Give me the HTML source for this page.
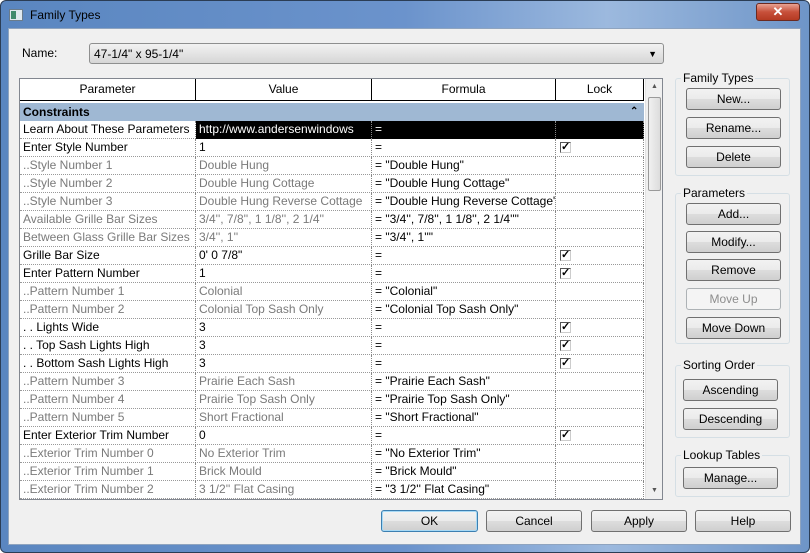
<!DOCTYPE html>
<html><head><style>
*{box-sizing:border-box;margin:0;padding:0}
body{width:810px;height:553px;overflow:hidden;font-family:"Liberation Sans",sans-serif;font-size:12px;color:#000;background:#fff}
.win{position:absolute;left:0;top:0;width:810px;height:553px;border-radius:6px;background:linear-gradient(90deg,#5a86c0 0%,#6b93cc 50%,#9cb9de 75%,#6e95c8 100%);border:1px solid #2b3d55}
.client{position:absolute;left:8px;top:28px;width:793px;height:517px;background:#f0f0f0;border:1px solid #8fa4bf}
.title{position:absolute;left:29px;top:7px;font-size:12px;color:#000}
.ico{position:absolute;left:8px;top:8px;width:14px;height:12px;background:#dfe8ef;border:1px solid #6a7c8c}
.ico:before{content:"";position:absolute;left:1px;top:1px;width:5px;height:8px;background:#3f8a6e}
.close{position:absolute;left:755px;top:2px;width:44px;height:18px;border-radius:3px;background:linear-gradient(#e8a293,#c7503a 50%,#b43a22);border:1px solid #6b2a20;color:#fff;font-weight:bold;text-align:center;line-height:16px;font-size:13px}
.a{position:absolute;white-space:nowrap}
.combo{position:absolute;left:89px;top:43px;width:575px;height:21px;border:1px solid #8e8f8f;border-radius:3px;background:linear-gradient(#f2f2f2,#e4e4e4 50%,#d6d6d6);padding:3px 0 0 4px}
.grid{position:absolute;left:19px;top:78px;width:644px;height:422px;border:1px solid #828790;background:#fff;overflow:hidden}
.hdr{position:absolute;top:0;height:22px;border-right:1px solid #000;border-bottom:1px solid #000;text-align:center;line-height:21px;background:#fff}
.row{position:absolute;left:0;width:624px;height:18px;border-bottom:1px dotted #999}
.c{position:absolute;top:0;height:18px;line-height:17px;padding-left:3px;border-right:1px dotted #888;overflow:hidden;white-space:nowrap}
.g{color:#7a7a7a}
.chk{position:absolute;left:540px;top:3px;width:11px;height:11px;border:1px solid #555;border-right-color:#ccc;border-bottom-color:#ccc;font-size:11px;line-height:9px;font-weight:bold}
.sb{position:absolute;left:625px;top:0;width:18px;height:420px;background:#f0f0f0;border-left:1px solid #e3e3e3}
.thumb{position:absolute;left:2px;top:18px;width:13px;height:94px;border:1px solid #9a9a9a;border-radius:2px;background:linear-gradient(90deg,#f1f1f1,#dcdcdc)}
.grp{position:absolute;border:1px solid #d5dfe5;border-radius:3px}
.gl{position:absolute;background:#f0f0f0;padding:0 2px;left:5px;top:-8px}
.btn{position:absolute;height:22px;border:1px solid #707070;border-radius:3px;background:linear-gradient(#f2f2f2,#ebebeb 50%,#dddddd 51%,#cfcfcf);text-align:center;line-height:20px}
.dis{color:#8d8d8d;border-color:#adb2b5;background:#f4f4f4}
</style></head><body>
<div class="win">
<div class="ico"></div><div class="title">Family Types</div>
<div class="close">✕</div>
</div>
<div class="client"></div>
<div class="a" style="left:22px;top:46px">Name:</div>
<div class="combo">47-1/4" x 95-1/4"<span style="position:absolute;right:6px;top:5px;font-size:9px">▼</span></div>
<div class="grid">
<div class="hdr" style="left:0;width:176px">Parameter</div>
<div class="hdr" style="left:176px;width:176px">Value</div>
<div class="hdr" style="left:352px;width:184px">Formula</div>
<div class="hdr" style="left:536px;width:88px">Lock</div>
<div class="row" style="top:24px;background:#9fb8d3;border:none;font-weight:bold;line-height:18px;padding-left:3px">Constraints<span style="position:absolute;left:610px;font-size:10px">⌃</span></div>
<div id="rows"></div>
<div class="sb"><div style="position:absolute;left:5px;top:4px;font-size:7px;color:#555">▲</div><div class="thumb"></div><div style="position:absolute;left:5px;top:408px;font-size:7px;color:#555">▼</div></div>
</div>
<script>
var R=[
["Learn About These Parameters","http://www.andersenwindows","=",0,0,1],
["Enter Style Number","1","=",1,0],
["..Style Number 1","Double Hung","= \"Double Hung\"",0,1],
["..Style Number 2","Double Hung Cottage","= \"Double Hung Cottage\"",0,1],
["..Style Number 3","Double Hung Reverse Cottage","= \"Double Hung Reverse Cottage\"",0,1],
["Available Grille Bar Sizes","3/4'', 7/8'', 1 1/8'', 2 1/4''","= \"3/4'', 7/8'', 1 1/8'', 2 1/4''\"",0,1],
["Between Glass Grille Bar Sizes","3/4'', 1''","= \"3/4'', 1''\"",0,1],
["Grille Bar Size","0'  0 7/8\"","=",1,0],
["Enter Pattern Number","1","=",1,0],
["..Pattern Number 1","Colonial","= \"Colonial\"",0,1],
["..Pattern Number 2","Colonial Top Sash Only","= \"Colonial Top Sash Only\"",0,1],
[". . Lights Wide","3","=",1,0],
[". . Top Sash Lights High","3","=",1,0],
[". . Bottom Sash Lights High","3","=",1,0],
["..Pattern Number 3","Prairie Each Sash","= \"Prairie Each Sash\"",0,1],
["..Pattern Number 4","Prairie Top Sash Only","= \"Prairie Top Sash Only\"",0,1],
["..Pattern Number 5","Short Fractional","= \"Short Fractional\"",0,1],
["Enter Exterior Trim Number","0","=",1,0],
["..Exterior Trim Number 0","No Exterior Trim","= \"No Exterior Trim\"",0,1],
["..Exterior Trim Number 1","Brick Mould","= \"Brick Mould\"",0,1],
["..Exterior Trim Number 2","3 1/2'' Flat Casing","= \"3 1/2'' Flat Casing\"",0,1]];
var h="";
R.forEach(function(r,i){var t=42+18*i;var g=r[4]?' g':'';var sel=r[5]?'background:#000;color:#fff;':'';
h+='<div class="row" style="top:'+t+'px"><div class="c'+g+'" style="left:0;width:176px">'+r[0]+'</div><div class="c'+g+'" style="left:176px;width:176px;'+sel+'">'+r[1]+'</div><div class="c" style="left:352px;width:184px;'+sel+'">'+r[2].replace(/</g,"&lt;")+'</div><div class="c" style="left:536px;width:88px;'+sel+'"></div>'+(r[3]?'<div class="chk">✓</div>':'')+'</div>';});
document.getElementById("rows").innerHTML=h;
</script>
<div class="grp" style="left:675px;top:78px;width:115px;height:98px"><span class="gl">Family Types</span></div>
<div class="btn" style="left:686px;top:88px;width:95px">New...</div>
<div class="btn" style="left:686px;top:117px;width:95px">Rename...</div>
<div class="btn" style="left:686px;top:146px;width:95px">Delete</div>
<div class="grp" style="left:675px;top:193px;width:115px;height:151px"><span class="gl">Parameters</span></div>
<div class="btn" style="left:686px;top:203px;width:95px">Add...</div>
<div class="btn" style="left:686px;top:231px;width:95px">Modify...</div>
<div class="btn" style="left:686px;top:259px;width:95px">Remove</div>
<div class="btn dis" style="left:686px;top:288px;width:95px">Move Up</div>
<div class="btn" style="left:686px;top:317px;width:95px">Move Down</div>
<div class="grp" style="left:675px;top:365px;width:115px;height:73px"><span class="gl">Sorting Order</span></div>
<div class="btn" style="left:683px;top:379px;width:95px">Ascending</div>
<div class="btn" style="left:683px;top:408px;width:95px">Descending</div>
<div class="grp" style="left:675px;top:455px;width:115px;height:42px"><span class="gl">Lookup Tables</span></div>
<div class="btn" style="left:683px;top:467px;width:95px">Manage...</div>
<div class="btn" style="left:381px;top:510px;width:97px;border-color:#3c7fb1;box-shadow:inset 0 0 0 1px #a7d9f5">OK</div>
<div class="btn" style="left:486px;top:510px;width:96px">Cancel</div>
<div class="btn" style="left:591px;top:510px;width:96px">Apply</div>
<div class="btn" style="left:695px;top:510px;width:96px">Help</div>
</body></html>
